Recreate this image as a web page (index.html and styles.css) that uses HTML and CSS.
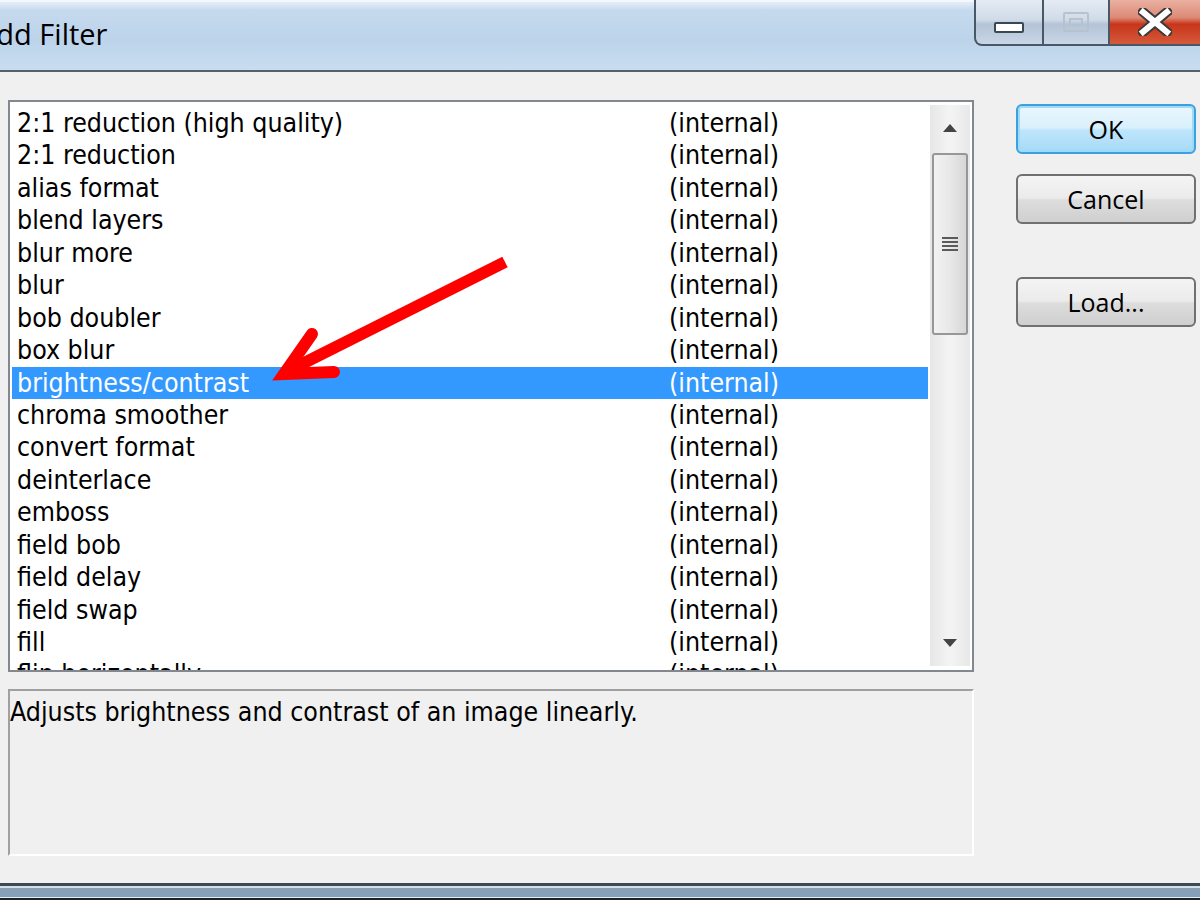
FILE: index.html
```html
<!DOCTYPE html>
<html lang="en">
<head>
  <meta charset="UTF-8" />
  <title>Add Filter</title>
  <link rel="stylesheet" href="styles.css">
</head>
<body>

  <div class="titlebar">
    <div class="title">Add Filter</div>
    <div class="caption-buttons">
      <div class="cap-btn cap-min"><span class="min-glyph"></span></div>
      <div class="cap-btn cap-max"><span class="max-glyph"></span></div>
      <div class="cap-btn cap-close">
        <svg width="34" height="28" viewBox="0 0 34 28">
          <path d="M5 4 L29 24 M29 4 L5 24" stroke="#3a3a3a" stroke-width="10" stroke-linecap="square" fill="none"/>
          <path d="M5 4 L29 24 M29 4 L5 24" stroke="#ffffff" stroke-width="6" stroke-linecap="square" fill="none"/>
        </svg>
      </div>
    </div>
  </div>

  <div class="dialog">
    <div class="left">
      <div class="listbox">
        <div class="rows">
          <div class="row"><span class="name">2:1 reduction (high quality)</span><span class="kind">(internal)</span></div>
          <div class="row"><span class="name">2:1 reduction</span><span class="kind">(internal)</span></div>
          <div class="row"><span class="name">alias format</span><span class="kind">(internal)</span></div>
          <div class="row"><span class="name">blend layers</span><span class="kind">(internal)</span></div>
          <div class="row"><span class="name">blur more</span><span class="kind">(internal)</span></div>
          <div class="row"><span class="name">blur</span><span class="kind">(internal)</span></div>
          <div class="row"><span class="name">bob doubler</span><span class="kind">(internal)</span></div>
          <div class="row"><span class="name">box blur</span><span class="kind">(internal)</span></div>
          <div class="row selected"><span class="name">brightness/contrast</span><span class="kind">(internal)</span></div>
          <div class="row"><span class="name">chroma smoother</span><span class="kind">(internal)</span></div>
          <div class="row"><span class="name">convert format</span><span class="kind">(internal)</span></div>
          <div class="row"><span class="name">deinterlace</span><span class="kind">(internal)</span></div>
          <div class="row"><span class="name">emboss</span><span class="kind">(internal)</span></div>
          <div class="row"><span class="name">field bob</span><span class="kind">(internal)</span></div>
          <div class="row"><span class="name">field delay</span><span class="kind">(internal)</span></div>
          <div class="row"><span class="name">field swap</span><span class="kind">(internal)</span></div>
          <div class="row"><span class="name">fill</span><span class="kind">(internal)</span></div>
          <div class="row"><span class="name">flip horizontally</span><span class="kind">(internal)</span></div>
        </div>
        <div class="scrollbar">
          <div class="sb-arrow sb-up">
            <svg width="16" height="10" viewBox="0 0 16 10"><path d="M8 1 L15 9 L1 9 Z" fill="#444"/></svg>
          </div>
          <div class="sb-track">
            <div class="sb-thumb"><span class="grip"></span></div>
          </div>
          <div class="sb-arrow sb-down">
            <svg width="16" height="10" viewBox="0 0 16 10"><path d="M1 1 L15 1 L8 9 Z" fill="#444"/></svg>
          </div>
        </div>
      </div>
      <div class="description">Adjusts brightness and contrast of an image linearly.</div>
    </div>

    <div class="right">
      <div class="button default">OK</div>
      <div class="button cancel">Cancel</div>
      <div class="button load">Load...</div>
    </div>
  </div>

  <div class="taskbar"></div>

  <svg class="arrow" width="1200" height="900" viewBox="0 0 1200 900">
    <path d="M505 262 L286 372" stroke="#ff0000" stroke-width="12" stroke-linecap="butt" fill="none"/>
    <path d="M312 334 L284 374 L334 372" stroke="#ff0000" stroke-width="12" stroke-linejoin="miter" stroke-linecap="round" fill="none"/>
  </svg>

</body>
</html>
```

FILE: styles.css
```css
body {
  margin: 0;
  width: 1200px;
  height: 900px;
  overflow: hidden;
  background-color: #f0f0f0;
  font-family: 'DejaVu Sans Condensed', 'DejaVu Sans', sans-serif;
  color: #000;
  position: relative;
}

/* window caption */
.titlebar {
  height: 68px;
  display: flex;
  justify-content: space-between;
  background: linear-gradient(to bottom, #e4eef8 0%, #c6daee 12%, #bcd3ea 55%, #c9ddf1 100%);
  border-top: 2px solid #f4f8fc;
  border-bottom: 2px solid #55606c;
}
.title {
  font-family: 'Open Sans', 'Noto Sans', sans-serif;
  font-size: 29px;
  margin-left: -22px;
  margin-top: 12px;
  color: #000;
}
.caption-buttons {
  display: flex;
  align-self: flex-start;
  margin-top: -2px;
}
.cap-btn {
  height: 44px;
  display: flex;
  align-items: center;
  justify-content: center;
  border: 2px solid #4a5866;
  border-top: none;
}
.cap-min {
  width: 66px;
  border-bottom-left-radius: 8px;
  background: linear-gradient(to bottom, #e4ebf3 0%, #d0dbe8 45%, #b4c4d6 55%, #c8d6e6 100%);
}
.cap-max {
  width: 64px;
  border-left: none;
  background: linear-gradient(to bottom, #e4ebf3 0%, #d0dbe8 45%, #b4c4d6 55%, #c8d6e6 100%);
}
.cap-close {
  width: 90px;
  border-left: none;
  border-right: none;
  background: linear-gradient(to bottom, #eab0a2 0%, #dc8a76 40%, #c8351a 55%, #d45a3c 100%);
}
.min-glyph {
  width: 26px;
  height: 7px;
  margin-top: 10px;
  background: #ffffff;
  border: 2px solid #3c4754;
  border-radius: 2px;
}
.max-glyph {
  width: 26px;
  height: 20px;
  border: 2px solid #b7c2cf;
  border-radius: 2px;
  box-sizing: border-box;
  position: relative;
}
.max-glyph::after {
  content: "";
  position: absolute;
  left: 4px;
  top: 4px;
  width: 14px;
  height: 8px;
  border: 2px solid #b7c2cf;
  box-sizing: border-box;
}

/* client area */
.dialog {
  display: flex;
  padding: 28px 0 0 8px;
}
.left {
  width: 966px;
}
.listbox {
  height: 568px;
  border: 2px solid #828790;
  background: #ffffff;
  display: flex;
  overflow: hidden;
}
.rows {
  flex: 1;
  padding: 5px 2px 0 2px;
  overflow: hidden;
}
.row {
  height: 32.45px;
  line-height: 32px;
  font-size: 26.5px;
  display: flex;
  white-space: nowrap;
  padding-left: 5px;
}
.row .name {
  width: 652px;
}
.row.selected {
  background: #3399ff;
  color: #ffffff;
}

.scrollbar {
  width: 40px;
  margin: 3px 2px 4px 0;
  display: flex;
  flex-direction: column;
  background: linear-gradient(to right, #e6e6e6, #f4f4f4 50%, #e8e8e8);
}
.sb-arrow {
  height: 46px;
  display: flex;
  align-items: center;
  justify-content: center;
}
.sb-track {
  flex: 1;
}
.sb-thumb {
  height: 178px;
  margin: 2px 2px 0 2px;
  border: 2px solid #979797;
  border-radius: 3px;
  background: linear-gradient(to right, #f2f2f2, #e8e8e8 50%, #d6d6d6);
  display: flex;
  align-items: center;
  justify-content: center;
}
.grip {
  width: 16px;
  height: 14px;
  background: repeating-linear-gradient(to bottom, #5a5a5a 0, #5a5a5a 2px, transparent 2px, transparent 4px);
}

.description {
  margin-top: 17px;
  height: 159px;
  border-top: 2px solid #a0a0a0;
  border-left: 2px solid #a0a0a0;
  border-right: 2px solid #ffffff;
  border-bottom: 2px solid #ffffff;
  font-size: 26.5px;
  line-height: 34px;
  padding-top: 4px;
}

.right {
  display: flex;
  flex-direction: column;
  margin-left: 42px;
  width: 180px;
}
.button {
  height: 46px;
  border: 2px solid #707070;
  border-radius: 6px;
  background: linear-gradient(to bottom, #f4f4f4 0%, #ebebeb 48%, #dddddd 52%, #cfcfcf 100%);
  font-family: 'Open Sans', 'Noto Sans', sans-serif;
  font-size: 25px;
  display: flex;
  align-items: center;
  justify-content: center;
}
.button.default {
  margin-top: 4px;
  border-color: #3c9fe0;
  box-shadow: inset 0 0 0 2px #9ddcf8;
  background: linear-gradient(to bottom, #eaf6fd 0%, #d9f0fc 48%, #bee6fd 52%, #a7d9f5 100%);
}
.button.cancel {
  margin-top: 20px;
}
.button.load {
  margin-top: 53px;
}

.taskbar {
  position: absolute;
  left: 0;
  right: 0;
  bottom: 0;
  height: 14px;
  border-top: 3px solid #3f4954;
  background: linear-gradient(to bottom, #d6e0ea 0 2px, #86a0ba 2px 11px, #e6ecf2 11px 12px, #1c2126 12px);
}

.arrow {
  position: absolute;
  left: 0;
  top: 0;
  pointer-events: none;
}
```
